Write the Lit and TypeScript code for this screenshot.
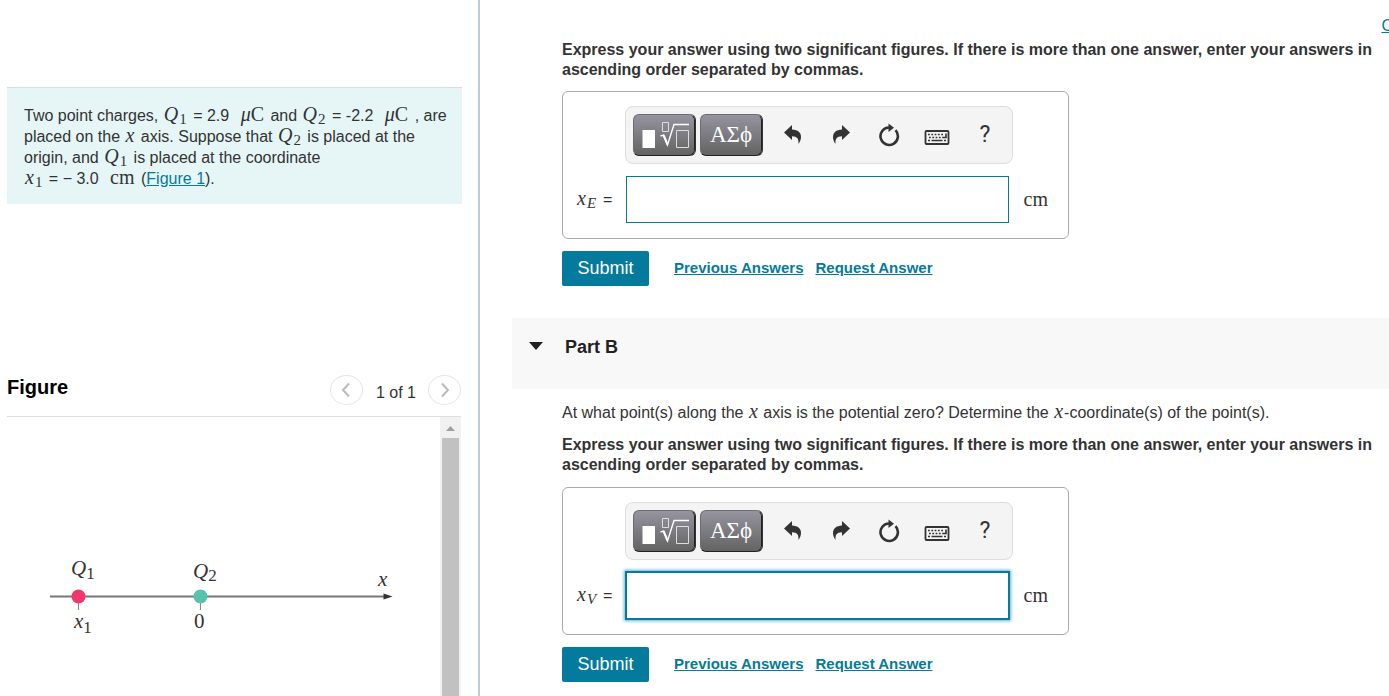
import { LitElement, html, css, svg } from "lit";
import { customElement, property, state } from "lit/decorators.js";
import { classMap } from "lit/directives/class-map.js";

const mathStyles = css`
  .math {
    margin: 0 1px;
    font-family: "Liberation Serif", serif;
    font-size: 20px;
    line-height: 1px;
    white-space: nowrap;
  }
  .math i {
    font-style: italic;
  }
  .math sub {
    margin-left: 1px;
    font-size: 15px;
    line-height: 1px;
    vertical-align: -3px;
  }
  .gap {
    margin-left: 7px;
  }
  a {
    color: #047a9c;
  }
`;

const variable = (name: string, index = "") => {
  const isNumber = /^\d*$/.test(index);
  return html`<span class="math"
    ><i>${name}</i>${index ? html`<sub>${isNumber ? index : html`<i>${index}</i>`}</sub>` : ""}</span
  >`;
};

@customElement("answer-box")
export class AnswerBox extends LitElement {
  @property() symbol = "x";
  @property() index = "";
  @property() unit = "cm";
  @property({ type: Boolean }) active = false;

  static styles = [
    mathStyles,
    css`
      :host {
        display: block;
      }
      .box {
        box-sizing: border-box;
        width: 507px;
        max-width: 100%;
        padding: 14px 19px 15px 13px;
        border: 1px solid #aaa;
        border-radius: 6px;
        display: grid;
        grid-template-columns: 49px 1fr auto;
        row-gap: 12px;
        align-items: center;
      }
      .toolbar {
        grid-column: 2;
        justify-self: start;
        display: flex;
        align-items: center;
        gap: 5px;
        padding: 7px 3px 7px 7px;
        border: 1px solid #ddd;
        border-radius: 8px;
        background: #f4f4f4;
      }
      .icons {
        display: flex;
        padding-left: 2px;
      }
      button {
        font: inherit;
        margin: 0;
        padding: 0;
        cursor: pointer;
      }
      .palette {
        width: 62px;
        height: 42px;
        box-sizing: border-box;
        border: 1px solid #6d6d6d;
        border-right-color: #222;
        border-bottom-color: #222;
        border-radius: 6px;
        box-shadow: 1px 0 0 #333;
        background: linear-gradient(#9694a0, #636363);
        color: #fff;
        font-family: "Liberation Serif", serif;
        font-size: 23px;
        line-height: 38px;
      }
      .palette svg,
      .icon svg {
        display: block;
        margin: 0 auto;
      }
      .icon {
        width: 48px;
        height: 42px;
        border: 0;
        background: none;
        color: #333;
        font-family: Roboto, sans-serif;
        font-size: 23px;
        line-height: 42px;
      }
      label {
        grid-column: 1;
        white-space: nowrap;
        font-size: 16px;
      }
      label .eq {
        margin-left: 6px;
      }
      input {
        box-sizing: border-box;
        min-width: 0;
        width: 383px;
        height: 47px;
        margin: 0 0 0 1px;
        padding: 0 8px;
        border: 1px solid #047a9c;
        background: #fff;
        font: inherit;
        outline: none;
      }
      input.active {
        box-shadow: 0 0 0 1px #047a9c, 0 0 3px 2px #62b4cb;
      }
      .actions {
        display: flex;
        align-items: center;
        margin-top: 12px;
      }
      .submit {
        width: 87px;
        height: 35px;
        margin-right: 25px;
        padding-bottom: 2px;
        border: 0;
        border-radius: 2px;
        background: #047a9c;
        color: #fff;
        font-size: 18px;
      }
      .actions a {
        margin-right: 12px;
        padding-bottom: 2px;
        font-size: 15px;
        font-weight: bold;
      }
    `,
  ];

  render() {
    return html`
      <div class="box">
        <div class="toolbar">
          <button class="palette" type="button" aria-label="Templates">
            <svg width="52" height="34" viewBox="0 0 52 34" fill="none" stroke="#fff">
              <path d="M4.500 12H17v18H4.500z" fill="#fff" stroke="none" />
              <path d="M24.500 4.500h6v9h-6z" stroke="#ddd" />
              <path d="M22.500 18l3-1 4 10L36 6.500h15" stroke-width="1.400" />
              <path d="M25.500 17l4 9.500" stroke-width="2" />
              <path d="M38.500 12.500h12v17h-12z" stroke="#ddd" />
            </svg>
          </button>
          <button class="palette" type="button">ΑΣϕ</button>
          <div class="icons">
            <button class="icon" type="button" aria-label="Undo">
              <svg width="20" height="22" viewBox="0 0 20 22" fill="currentColor">
                <path d="M1 8.500L9 1v4.500c6 .3 9 3 9 7.500 0 2.500-.9 4.500-2.500 7 .3-5-1-7.500-6.500-7.700V16z" />
              </svg>
            </button>
            <button class="icon" type="button" aria-label="Redo">
              <svg width="20" height="22" viewBox="0 0 20 22" fill="currentColor">
                <path d="M19 8.500L11 1v4.500C5 5.800 2 8.500 2 13c0 2.500.9 4.500 2.500 7-.3-5 1-7.500 6.500-7.700V16z" />
              </svg>
            </button>
            <button class="icon" type="button" aria-label="Reset">
              <svg width="22" height="24" viewBox="0 0 22 24">
                <path
                  d="M11 4.500A8.700 8.700 0 1 0 17.500 7.200"
                  fill="none"
                  stroke="currentColor"
                  stroke-width="2.600"
                />
                <path d="M10.500 0.500l5.500 4.300-5.500 4.200z" fill="currentColor" />
              </svg>
            </button>
            <button class="icon" type="button" aria-label="Keyboard">
              <svg width="26" height="24" viewBox="0 0 26 24" fill="none" stroke="currentColor">
                <rect x="1.500" y="8" width="23" height="13" rx="1" stroke-width="1.800" />
                <path d="M4 11.500h15M5 14.500h14" stroke-width="1.600" stroke-dasharray="1.800 1.500" />
                <path d="M4 17.500h2M7.500 17.500h11M20 17.500h2M19 14.500h3V10.500" stroke-width="1.600" />
              </svg>
            </button>
            <button class="icon" type="button" aria-label="Help">?</button>
          </div>
        </div>
        <label for="answer">${variable(this.symbol, this.index)}<span class="eq">=</span></label>
        <input id="answer" type="text" class=${classMap({ active: this.active })} />
        <span class="math">${this.unit}</span>
      </div>
      <div class="actions">
        <button class="submit" type="button">Submit</button>
        <a href="#previous">Previous Answers</a>
        <a href="#request">Request Answer</a>
      </div>
    `;
  }
}

@customElement("charge-diagram")
export class ChargeDiagram extends LitElement {
  static styles = css`
    :host {
      display: block;
    }
    svg {
      display: block;
    }
    text {
      font-family: "Liberation Serif", serif;
      font-size: 21px;
      fill: #333;
    }
    .it {
      font-style: italic;
    }
    .sub {
      font-size: 17px;
      font-style: normal;
    }
  `;

  render() {
    return html`<svg width="370" height="100" viewBox="0 0 370 100" role="img">
      ${svg`
        <path d="M10 51.500H346" stroke="#777" stroke-width="2" />
        <path d="M352.500 51.500l-9-3v6z" fill="#333" />
        <path d="M38.500 51v14M160.500 51v14" stroke="#888" />
        <circle cx="38.500" cy="51.500" r="7" fill="#f0386f" />
        <circle cx="160.500" cy="51.500" r="7" fill="#58c2ac" />
        <text x="31" y="30" class="it">Q<tspan class="sub" dy="4">1</tspan></text>
        <text x="153" y="33" class="it">Q<tspan class="sub" dy="3">2</tspan></text>
        <text x="338" y="41" class="it">x</text>
        <text x="34" y="83" class="it">x<tspan class="sub" dy="5">1</tspan></text>
        <text x="154" y="83">0</text>
      `}
    </svg>`;
  }
}

@customElement("app-root")
export class AppRoot extends LitElement {
  @state() private activePart = "V";

  static styles = [
    mathStyles,
    css`
      :host {
        display: grid;
        grid-template-columns: 478px minmax(0, 1fr);
        height: 100vh;
        overflow: hidden;
        background: #fff;
        color: #333;
        font: 16px/20px "Liberation Sans", Arial, sans-serif;
      }
      .left {
        display: grid;
        grid-template-rows: 366px minmax(0, 1fr);
        padding: 0 16px 0 7px;
        min-height: 0;
      }
      .right {
        border-left: 2px solid #bccede;
        padding-left: 32px;
        min-height: 0;
        overflow: hidden;
      }
      p {
        margin: 0;
      }
      .intro {
        align-self: start;
        margin-top: 87px;
        padding: 17px 0 15px 17px;
        border-top: 1px solid #d6dfdf;
        background: #e6f6f7;
        line-height: 21px;
        white-space: nowrap;
      }
      .intro .math {
        margin-right: 2px;
      }
      .intro .gap {
        margin-left: 7px;
      }
      .figure {
        display: flex;
        flex-direction: column;
        min-height: 0;
        padding-right: 1px;
      }
      .figure-head {
        display: flex;
        align-items: center;
        height: 50px;
        border-bottom: 1px solid #ddd;
      }
      h2 {
        margin: 0 auto 8px 0;
        color: #000;
        font-size: 20px;
      }
      .pager {
        display: grid;
        place-items: center;
        width: 33px;
        height: 30px;
        margin-bottom: 2px;
        padding: 0;
        border: 1px solid #e6e6e6;
        border-radius: 50%;
        background: #fff;
      }
      .count {
        margin: 4px 12px 0 13px;
      }
      .figure-body {
        flex: 1;
        display: flex;
        justify-content: space-between;
        min-height: 0;
      }
      charge-diagram {
        margin: 128px 0 0 33px;
      }
      .scrollbar {
        display: flex;
        flex-direction: column;
        align-items: center;
        flex: none;
        width: 21px;
        background: #f1f1f1;
      }
      .arrow {
        margin: 9px 0 7px;
      }
      .thumb {
        flex: 1;
        width: 17px;
        background: #c1c1c1;
      }
      .top-link {
        display: flex;
        justify-content: flex-end;
        padding-top: 16px;
        margin-right: -4px;
      }
      .body {
        padding-left: 50px;
      }
      .part-a p {
        margin: 4px 0 11px;
      }
      .part-head {
        display: flex;
        align-items: flex-start;
        box-sizing: border-box;
        height: 71px;
        margin: 32px 0 14px;
        padding: 19px 0 0 17px;
        background: #f8f8f8;
      }
      .part-head svg {
        margin-right: 22px;
      }
      h3 {
        margin: 0;
        color: #222;
        font-size: 18px;
      }
      .part-b p {
        margin-bottom: 12px;
      }
      .instructions {
        font-weight: bold;
      }
    `,
  ];

  private instructions = html`<p class="instructions">
    Express your answer using two significant figures. If there is more than one answer, enter your
    answers in ascending order separated by commas.
  </p>`;

  render() {
    return html`
      <section class="left">
        <p class="intro">
          Two point charges, ${variable("Q", "1")} = 2.9
          <span class="math gap"><i>μ</i>C</span> and ${variable("Q", "2")} = -2.2
          <span class="math gap"><i>μ</i>C</span> , are<br />
          placed on the ${variable("x")} axis. Suppose that ${variable("Q", "2")} is placed at the<br />
          origin, and ${variable("Q", "1")} is placed at the coordinate<br />
          ${variable("x", "1")} = − 3.0 <span class="math gap">cm</span> (<a href="#figure"
            >Figure 1</a
          >).
        </p>
        <div class="figure" id="figure">
          <div class="figure-head">
            <h2>Figure</h2>
            <button class="pager" type="button" aria-label="Previous figure">
              <svg width="12" height="16" viewBox="0 0 12 16" fill="none" stroke="#bbb" stroke-width="2">
                <path d="M9 1.500L3 8l6 6.500" />
              </svg>
            </button>
            <span class="count">1 of 1</span>
            <button class="pager" type="button" aria-label="Next figure">
              <svg width="12" height="16" viewBox="0 0 12 16" fill="none" stroke="#bbb" stroke-width="2">
                <path d="M3 1.500L9 8l-6 6.500" />
              </svg>
            </button>
          </div>
          <div class="figure-body">
            <charge-diagram></charge-diagram>
            <div class="scrollbar">
              <svg class="arrow" width="9" height="5" viewBox="0 0 9 5">
                <path d="M0 5l4.500-5L9 5z" fill="#a0a0a0" />
              </svg>
              <div class="thumb"></div>
            </div>
          </div>
        </div>
      </section>
      <main class="right">
        <div class="top-link"><a href="#constants">C</a></div>
        <div class="body part-a">
          ${this.instructions}
          <answer-box index="E" ?active=${this.activePart === "E"} @focusin=${() => (this.activePart = "E")}></answer-box>
        </div>
        <div class="part-head">
          <svg width="14" height="18" viewBox="0 0 14 18"><path d="M0 5h14l-7 8z" fill="#222" /></svg>
          <h3>Part B</h3>
        </div>
        <div class="body part-b">
          <p>
            At what point(s) along the ${variable("x")} axis is the potential zero? Determine the
            ${variable("x")}-coordinate(s) of the point(s).
          </p>
          ${this.instructions}
          <answer-box index="V" ?active=${this.activePart === "V"} @focusin=${() => (this.activePart = "V")}></answer-box>
        </div>
      </main>
    `;
  }
}
